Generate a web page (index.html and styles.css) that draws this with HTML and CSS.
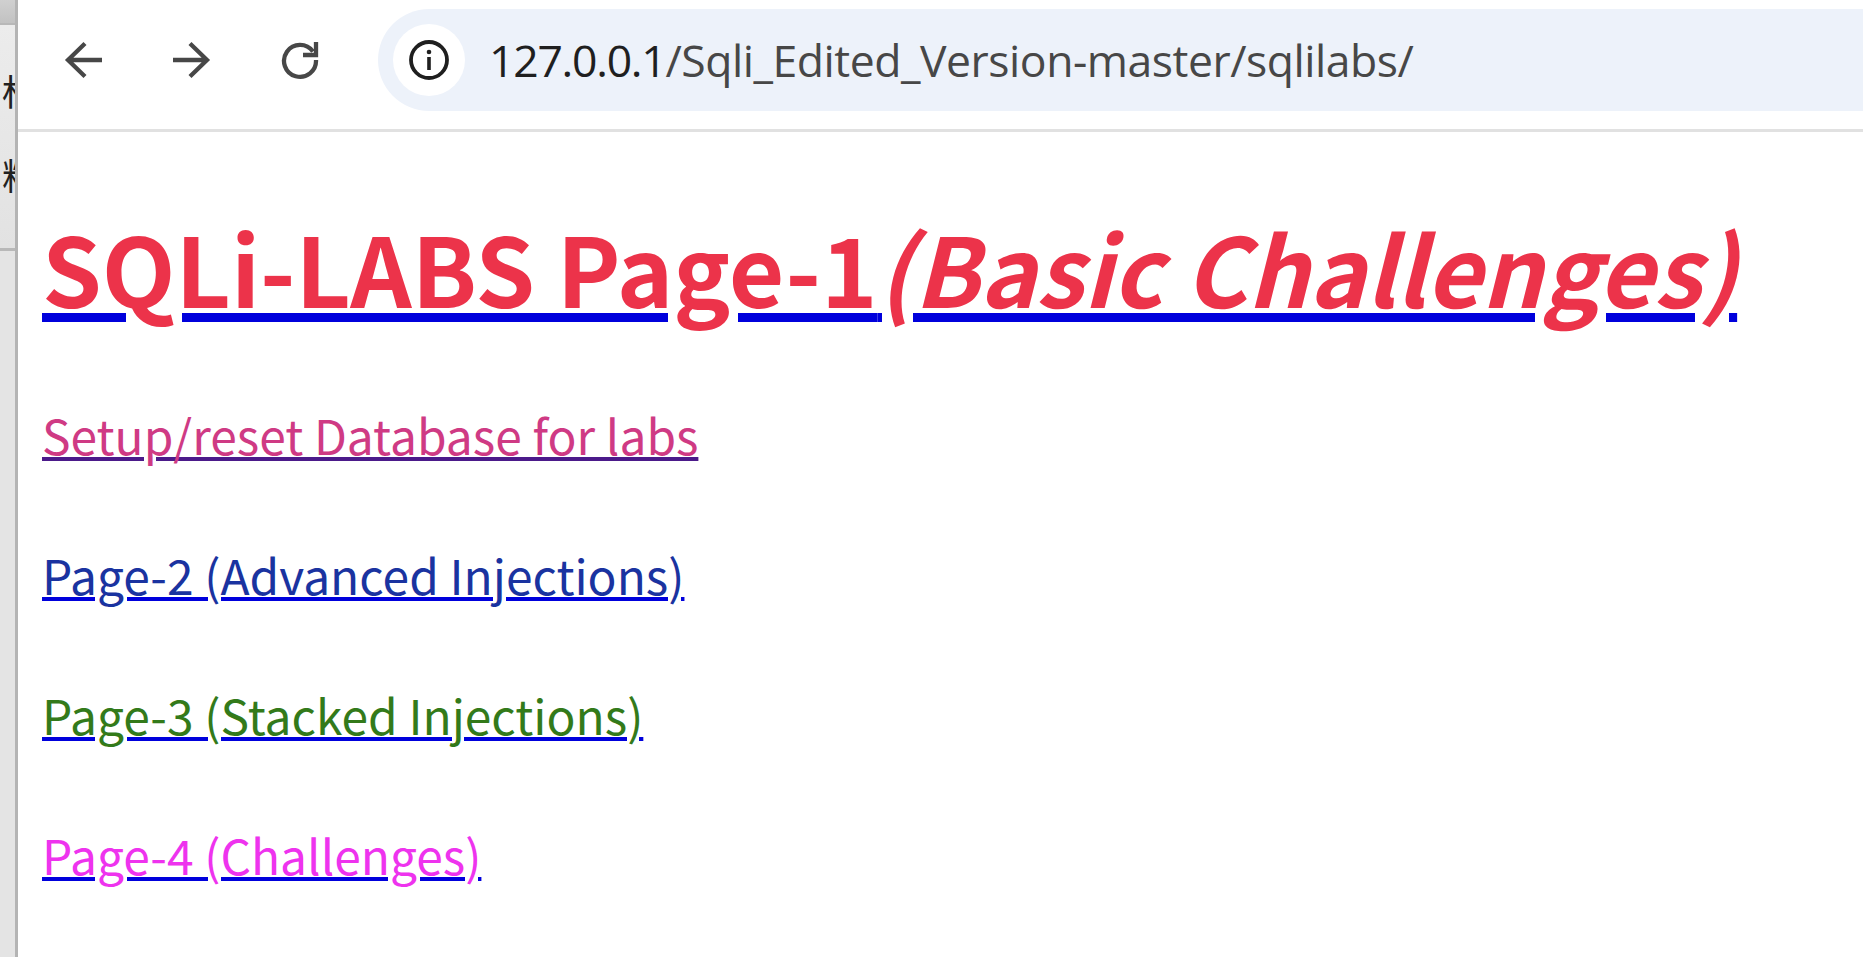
FILE: index.html
```html
<!DOCTYPE html>
<html lang="en">
<head>
<meta charset="utf-8">
<title>SQLi-LABS Page-1</title>
<link rel="stylesheet" href="styles.css">
</head>
<body>
<div class="frame">
  <aside class="strip">
    <div class="strip-top"></div>
    <div class="strip-panel">
      <span class="strip-text">标</span>
      <span class="strip-text">料</span>
    </div>
  </aside>
  <div class="window">
    <header class="toolbar">
      <button class="nav nav-back" aria-label="Back">
        <svg width="40" height="40" viewBox="0 0 40 40"><path d="M38 20H4M21 3.500 4 20l0 0 17 16.500" /></svg>
      </button>
      <button class="nav nav-forward" aria-label="Forward">
        <svg width="40" height="40" viewBox="0 0 40 40"><path d="M2 20H36M19 3.500 36 20l0 0-17 16.500" /></svg>
      </button>
      <button class="nav nav-reload" aria-label="Reload">
        <svg width="40" height="40" viewBox="0 0 40 40"><path d="M33 11.500A16 16 0 1 0 36 20" /><path d="M36 2V15H23" /></svg>
      </button>
      <div class="omnibox">
        <span class="site-info">
          <svg width="42" height="42" viewBox="0 0 42 42"><circle class="ring" cx="21" cy="21" r="18" /><rect class="mark" x="19.200" y="18" width="3.600" height="13" /><circle class="mark" cx="21" cy="13" r="2.300" /></svg>
        </span>
        <span class="url"><span class="host">127.0.0.1</span>/Sqli_Edited_Version-master/sqlilabs/</span>
      </div>
    </header>
    <main class="content">
      <h1 class="title"><a href="#">SQLi-LABS Page-1<i>(Basic Challenges)</i></a></h1>
      <nav class="links">
        <a class="link visited setup" href="#">Setup/reset Database for labs</a>
        <a class="link page2" href="#">Page-2 (Advanced Injections)</a>
        <a class="link page3" href="#">Page-3 (Stacked Injections)</a>
        <a class="link page4" href="#">Page-4 (Challenges)</a>
      </nav>
    </main>
  </div>
</div>
</body>
</html>
```
FILE: styles.css
```css
html, body {
  margin: 0;
  height: 100%;
  overflow: hidden;
  background: #fff;
}

.frame {
  display: flex;
  height: 957px;
}

.strip {
  flex: 0 0 18px;
  box-sizing: border-box;
  overflow: hidden;
  background: #e4e4e4;
  border-right: 3px solid #b4b4b4;
}

.strip-top {
  height: 23px;
  background: linear-gradient(#d0d0d0, #c2c2c2);
  border-bottom: 2px solid #b8b8b8;
}

.strip-panel {
  box-sizing: border-box;
  height: 226px;
  padding: 39px 0 0 2px;
  display: flex;
  flex-direction: column;
  gap: 32px;
  background: linear-gradient(#ececec, #e2e2e2);
  border-bottom: 3px solid #b8b8b8;
}

.strip-text {
  display: block;
  width: 40px;
  font: 36px/52px "Noto Sans CJK SC", sans-serif;
  color: #222;
}

.window {
  flex: 1;
  min-width: 0;
}

.toolbar {
  box-sizing: border-box;
  height: 132px;
  display: flex;
  align-items: flex-start;
  padding: 9px 0 0 0;
  border-bottom: 3px solid #e1e1e1;
  overflow: hidden;
}

.nav {
  flex: none;
  width: 40px;
  height: 40px;
  padding: 0;
  margin-top: 31px;
  border: 0;
  background: none;
}

.nav svg {
  display: block;
  fill: none;
  stroke: #474747;
  stroke-width: 4.300;
}

.nav-back { margin-left: 46px; }
.nav-forward { margin-left: 67px; }
.nav-reload { margin-left: 69px; }

.omnibox {
  flex: 1;
  height: 102px;
  margin-left: 58px;
  margin-right: -80px;
  border-radius: 51px;
  background: #edf2fa;
  display: flex;
  align-items: center;
  padding-left: 15px;
}

.site-info {
  flex: none;
  width: 72px;
  height: 72px;
  border-radius: 50%;
  background: #fff;
  display: flex;
  align-items: center;
  justify-content: center;
}

.ring {
  fill: none;
  stroke: #1f1f1f;
  stroke-width: 3.800;
}

.mark {
  fill: #1f1f1f;
}

.url {
  margin-left: 24px;
  font: 44.500px/60px "Open Sans", sans-serif;
  letter-spacing: -0.470px;
  color: #474747;
  white-space: nowrap;
}

.host {
  color: #1f1f1f;
  letter-spacing: -1.250px;
}

.content {
  padding: 0 24px;
}

.title {
  margin: 65px 0 0;
  font: 700 95.800px/139px "Noto Sans CJK SC", sans-serif;
  color: #ec334a;
  white-space: nowrap;
}

.title a,
.link {
  color: #0000dc;
  text-decoration: underline;
}

.title a {
  color: #ec334a;
  text-decoration-color: #0000dc;
  text-decoration-thickness: 9px;
}

.links {
  display: flex;
  flex-direction: column;
  align-items: flex-start;
  gap: 70px;
  margin-top: 63px;
}

.link {
  font: 47.900px/70px "Noto Sans CJK SC", sans-serif;
  text-decoration-color: #0000dc;
  text-decoration-thickness: 4px;
}

.setup { color: #cf3a84; text-decoration-color: #4b1a8a; }
.page2 { color: #1a33a0; }
.page3 { color: #337a1a; }
.page4 { color: #ee33ee; }
```
